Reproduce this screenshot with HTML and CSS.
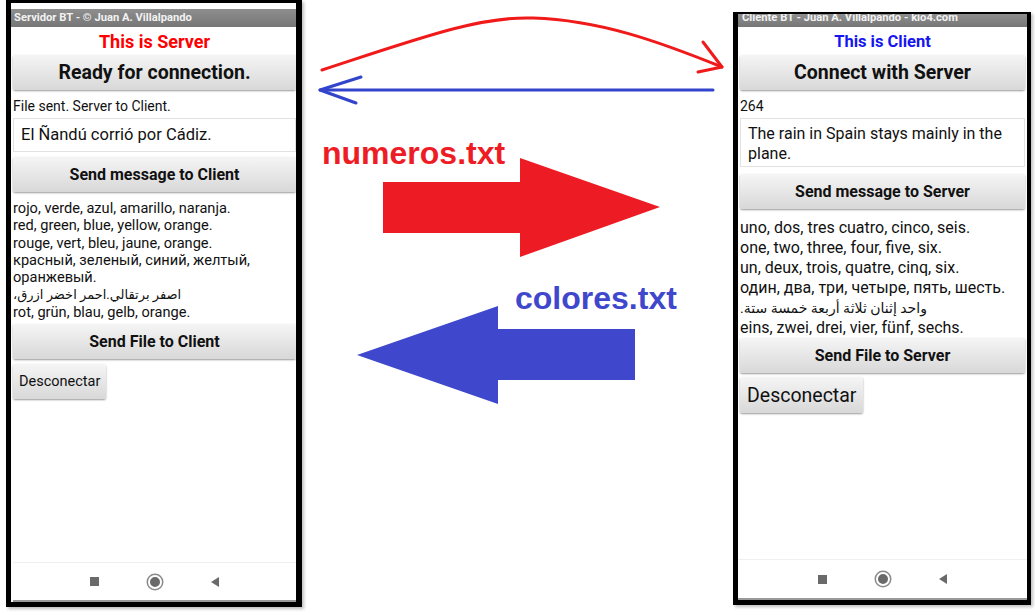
FILE: index.html
```html
<!DOCTYPE html>
<html lang="es">
<head>
  <meta charset="UTF-8" />
  <title>Servidor y Cliente BT</title>
  <link rel="stylesheet" href="styles.css">
</head>
<body>
  <div class="phone server">
    <div class="titlebar">Servidor BT - © Juan A. Villalpando</div>
    <div class="screen">
      <div class="who red">This is Server</div>
      <button class="btn big">Ready for connection.</button>
      <div class="label">File sent. Server to Client.</div>
      <div class="textbox">El Ñandú corrió por Cádiz.</div>
      <button class="btn">Send message to Client</button>
      <div class="lines">
        <div>rojo, verde, azul, amarillo, naranja.</div>
        <div>red, green, blue, yellow, orange.</div>
        <div>rouge, vert, bleu, jaune, orange.</div>
        <div>красный, зеленый, синий, желтый,</div>
        <div>оранжевый.</div>
        <div class="rtl" dir="rtl">اصفر برتقالي.احمر اخضر ازرق،</div>
        <div>rot, grün, blau, gelb, orange.</div>
      </div>
      <button class="btn">Send File to Client</button>
      <button class="btn small">Desconectar</button>
    </div>
    <div class="navbar">
      <span class="nav-square"></span>
      <span class="nav-home"></span>
      <span class="nav-back"></span>
    </div>
  </div>

  <svg class="diagram" width="431" height="615" viewBox="302 0 431 615">
    <!-- flechas finas -->
    <path d="M322 70 C 420 38, 480 16, 533 18 C 600 20, 660 42, 722 67" fill="none" stroke="#f01a1a" stroke-width="3" stroke-linecap="round"/>
    <path d="M703 42 L722 67 L698 72" fill="none" stroke="#f01a1a" stroke-width="3" stroke-linecap="round" stroke-linejoin="round"/>
    <path d="M713 90 L320 90" fill="none" stroke="#3344cc" stroke-width="3" stroke-linecap="round"/>
    <path d="M361 77 L320 90 L356 103" fill="none" stroke="#3344cc" stroke-width="3" stroke-linecap="round" stroke-linejoin="round"/>
    <!-- flechas gruesas -->
    <text x="322" y="164" class="file-red">numeros.txt</text>
    <polygon points="383,182 520,182 520,158 660,207 520,257 520,233 383,233" fill="#ed1c24"/>
    <text x="515" y="309" class="file-blue">colores.txt</text>
    <polygon points="635,329 498,329 498,306 357,355 498,404 498,380 635,380" fill="#3f48cc"/>
  </svg>

  <div class="phone client">
    <div class="titlebar cut"><span>Cliente BT - Juan A. Villalpando - kio4.com</span></div>
    <div class="screen">
      <div class="who blue">This is Client</div>
      <button class="btn big">Connect with Server</button>
      <div class="label">264</div>
      <div class="textbox">The rain in Spain stays mainly in the plane.</div>
      <button class="btn">Send message to Server</button>
      <div class="lines">
        <div>uno, dos, tres cuatro, cinco, seis.</div>
        <div>one, two, three, four, five, six.</div>
        <div>un, deux, trois, quatre, cinq, six.</div>
        <div>один, два, три, четыре, пять, шесть.</div>
        <div class="rtl" dir="rtl">واحد إثنان ثلاثة أربعة خمسة ستة.</div>
        <div>eins, zwei, drei, vier, fünf, sechs.</div>
      </div>
      <button class="btn">Send File to Server</button>
      <button class="btn small">Desconectar</button>
    </div>
    <div class="navbar">
      <span class="nav-square"></span>
      <span class="nav-home"></span>
      <span class="nav-back"></span>
    </div>
  </div>
</body>
</html>
```

FILE: styles.css
```css
body {
  margin: 0;
  width: 1035px;
  height: 615px;
  overflow: hidden;
  background: white;
  font-family: Roboto, "DejaVu Sans", sans-serif;
  color: #111;
  display: flex;
  align-items: flex-start;
}
.phone {
  display: flex;
  flex-direction: column;
  background: white;
  border: 5px solid #000;
  box-shadow: 2px 2px 3px rgba(0, 0, 0, 0.25);
}
.phone.server {
  margin-left: 6px;
  width: 285px;
  height: 593px;
  border-top-width: 3px;
  border-right-width: 6px;
  padding-top: 6px;
}
.phone.client {
  width: 289px;
  height: 586px;
  margin-top: 12px;
  border-top-width: 2px;
  border-right-width: 4px;
}
.titlebar {
  height: 18px;
  line-height: 18px;
  background: linear-gradient(#8e8e8e, #767676);
  color: #f2f2f2;
  font-size: 11.2px;
  font-weight: bold;
  padding-left: 3px;
  white-space: nowrap;
  overflow: hidden;
}
.titlebar.cut {
  height: 13px;
  line-height: 13px;
  padding-left: 4px;
}
.titlebar.cut span {
  display: block;
  margin-top: -3px;
}
.screen {
  display: flex;
  flex-direction: column;
  align-items: flex-start;
  padding: 0 0 0 2px;
}
.client .screen {
  padding: 0 2px;
}
.who {
  align-self: stretch;
  text-align: center;
  height: 28px;
  line-height: 30px;
  font-weight: bold;
  font-size: 18px;
}
.who.red { color: #f00; }
.who.blue { color: #1515f0; font-size: 16.5px; }
.btn {
  align-self: stretch;
  height: 35px;
  border: none;
  border-radius: 2px;
  background: linear-gradient(#f5f5f5, #d8d8d8);
  box-shadow: 0 1px 2px rgba(0, 0, 0, 0.4);
  font-family: inherit;
  font-weight: bold;
  font-size: 16px;
  color: #111;
  padding: 0;
}
.btn.big {
  font-size: 19.5px;
}
.btn.small {
  align-self: flex-start;
  font-weight: normal;
  font-size: 14.5px;
  padding: 0 6px;
  margin-top: 5px;
}
.client .btn.small {
  font-size: 19.5px;
  height: 36px;
  padding: 0 7px;
  margin-top: 4px;
}
.label {
  height: 28px;
  line-height: 32px;
  font-size: 14px;
}
.textbox {
  align-self: stretch;
  box-sizing: border-box;
  height: 34px;
  border: 1px solid #e2e2e2;
  padding: 6px 7px 0;
  font-size: 16.5px;
  line-height: 20px;
  margin-bottom: 5px;
}
.client .textbox {
  height: 49px;
  padding: 5px 7px 0;
  font-size: 16px;
  margin-bottom: 7px;
}
.lines {
  font-size: 14.6px;
  line-height: 17.3px;
  padding: 8px 0 3px;
}
.client .lines {
  font-size: 16px;
  line-height: 20px;
  padding: 9px 0 0;
}
.rtl {
  text-align: left;
  font-size: 13px;
}
.client .rtl {
  font-size: 14px;
}
.navbar {
  margin-top: auto;
  height: 38px;
  border-top: 1px solid #f0f0f0;
  border-bottom: 2px solid #9a9a9a;
  display: flex;
  align-items: center;
  justify-content: center;
  gap: 49px;
}
.server .navbar {
  margin-left: 2px;
  height: 37px;
}
.nav-square {
  width: 9px;
  height: 9px;
  background: #6a6a6a;
}
.nav-home {
  width: 10px;
  height: 10px;
  border-radius: 50%;
  background: #6a6a6a;
  border: 2px solid white;
  box-shadow: 0 0 0 1.5px #8a8a8a;
}
.nav-back {
  width: 0;
  height: 0;
  border-top: 5px solid transparent;
  border-bottom: 5px solid transparent;
  border-right: 8px solid #6a6a6a;
}
.diagram {
  flex: none;
}
.file-red {
  font-family: "Liberation Sans", Arial, sans-serif;
  font-weight: bold;
  font-size: 32px;
  fill: #ee1c24;
}
.file-blue {
  font-family: "Liberation Sans", Arial, sans-serif;
  font-weight: bold;
  font-size: 32px;
  fill: #3f48cc;
}
```
